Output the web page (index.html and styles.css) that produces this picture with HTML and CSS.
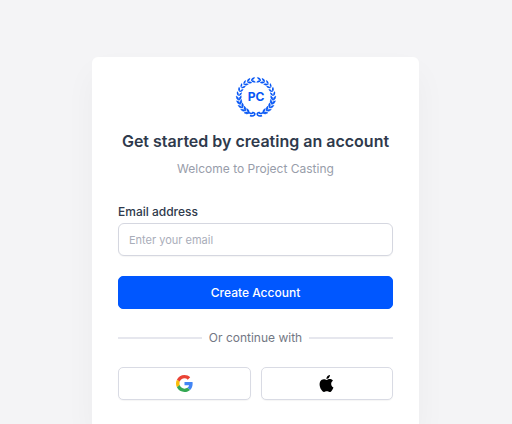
FILE: index.html
```
<!DOCTYPE html>
<html lang="en">
<head>
<meta charset="utf-8">
<meta name="viewport" content="width=device-width, initial-scale=1">
<title>Project Casting</title>
<link rel="stylesheet" href="styles.css">
</head>
<body>
<main class="page">
  <section class="card">
    <svg class="logo" viewBox="-21 -21 42 42" role="img" aria-label="Project Casting">
      <defs>
        <path id="leaf" d="M-2.4 -17.2Q-1.600 -20 2 -19.700Q1 -17.200 -2.400 -17.200ZM-2.400 -17.200Q.8 -17.300 2 -14.700Q-1.200 -14.200 -2.400 -17.200Z"/>
        <g id="branch">
          <use href="#leaf" class="tip" transform="rotate(-9)"/>
          <use href="#leaf" class="tip" transform="rotate(-23)"/>
          <use href="#leaf" class="tip" transform="rotate(-37)"/>
          <use href="#leaf" transform="rotate(-51)"/>
          <use href="#leaf" transform="rotate(-65)"/>
          <use href="#leaf" transform="rotate(-79)"/>
          <use href="#leaf" class="base" transform="rotate(-93)"/>
          <use href="#leaf" class="base" transform="rotate(-107)"/>
          <use href="#leaf" class="base" transform="rotate(-121)"/>
          <use href="#leaf" class="base" transform="rotate(-135)"/>
          <use href="#leaf" class="base" transform="rotate(-149)"/>
          <path class="stem" d="M-7 15.500Q-4.500 17.500 -3 15.500Q-.5 16 -1.500 18Q-3.500 19.800 -6 18.500"/>
        </g>
      </defs>
      <use href="#branch"/>
      <use href="#branch" transform="scale(-1 1)"/>
      <text class="logo-text" x="0" y="4" text-anchor="middle">PC</text>
    </svg>
    <h1 class="title">Get started by creating an account</h1>
    <p class="subtitle">Welcome to Project Casting</p>
    <form class="form">
      <label class="label" for="email">Email address</label>
      <input class="input" id="email" type="email" placeholder="Enter your email">
      <button class="button primary" type="submit">Create Account</button>
      <div class="divider">Or continue with</div>
      <div class="providers">
        <button class="button provider" type="button" aria-label="Google">
          <svg class="icon" viewBox="0 0 48 48" aria-hidden="true">
            <path fill="#EA4335" d="M24 9.500c3.540 0 6.710 1.220 9.210 3.600l6.850-6.850C35.900 2.380 30.470 0 24 0 14.620 0 6.510 5.380 2.560 13.220l7.980 6.190C12.430 13.720 17.740 9.500 24 9.500z"/>
            <path fill="#4285F4" d="M46.980 24.550c0-1.570-.15-3.090-.38-4.550H24v9.020h12.940c-.58 2.960-2.260 5.480-4.780 7.180l7.730 6c4.510-4.180 7.090-10.360 7.090-17.650z"/>
            <path fill="#FBBC05" d="M10.530 28.590c-.48-1.450-.76-2.990-.76-4.590s.27-3.140.76-4.590l-7.980-6.190C.92 16.460 0 20.120 0 24s.92 7.540 2.560 10.780z"/>
            <path fill="#34A853" d="M24 48c6.480 0 11.930-2.130 15.890-5.810l-7.730-6c-2.150 1.450-4.920 2.300-8.160 2.300-6.260 0-11.570-4.220-13.470-9.910l-7.980 6.190C6.510 42.620 14.620 48 24 48z"/>
          </svg>
        </button>
        <button class="button provider" type="button" aria-label="Apple">
          <svg class="icon" viewBox="0 0 24 24" aria-hidden="true">
            <path d="M12.152 6.896c-.948 0-2.415-1.078-3.960-1.040-2.040.027-3.910 1.183-4.961 3.014-2.117 3.675-.546 9.103 1.519 12.090 1.013 1.454 2.208 3.090 3.792 3.039 1.520-.065 2.090-.987 3.935-.987 1.831 0 2.350.987 3.960.948 1.637-.026 2.676-1.480 3.676-2.948 1.156-1.688 1.636-3.325 1.662-3.415-.039-.013-3.182-1.221-3.220-4.857-.026-3.040 2.480-4.494 2.597-4.559-1.429-2.090-3.623-2.324-4.390-2.376-2-.156-3.675 1.090-4.610 1.090zM15.530 3.830c.843-1.012 1.400-2.427 1.245-3.830-1.207.052-2.662.805-3.532 1.818-.780.896-1.454 2.338-1.273 3.714 1.338.104 2.715-.688 3.559-1.701"/>
          </svg>
        </button>
      </div>
    </form>
  </section>
</main>
</body>
</html>
```
FILE: styles.css
```
* {
  box-sizing: border-box;
}

body {
  margin: 0;
  background: #f4f4f6;
  color: #2f3a4c;
  font-family: Inter, "Liberation Sans", sans-serif;
}

.page {
  display: flex;
  justify-content: center;
  min-height: 100vh;
  padding: 57px 17px 0 16px;
  overflow: hidden;
}

.card {
  width: 100%;
  max-width: 327px;
  padding: 19px 26px 24px;
  border-radius: 6px 6px 0 0;
  background: #fff;
  box-shadow: 0 16px 32px rgb(40 40 60 / 4%);
}

.logo {
  display: block;
  width: 42px;
  height: 42px;
  margin: 0 auto;
  fill: #0757f5;
}

.base {
  stroke: #0757f5;
  stroke-width: .5;
}

.tip {
  stroke: #0757f5;
  stroke-width: .1;
}

.stem {
  fill: none;
  stroke: #0757f5;
  stroke-width: 1.6;
}

.logo-text {
  font-size: 12px;
  font-weight: 700;
}

.title {
  margin: 12px 0 0;
  font-size: 16px;
  font-weight: 600;
  line-height: 22px;
  text-align: center;
  white-space: nowrap;
}

.subtitle {
  margin: 8px 0 0;
  color: #989daa;
  font-size: 12px;
  line-height: 18px;
  text-align: center;
}

.form {
  display: flex;
  flex-direction: column;
  margin-top: 25px;
}

.label {
  font-size: 12px;
  font-weight: 500;
  line-height: 18px;
}

.input {
  width: 100%;
  height: 33px;
  margin: 2px 0 20px;
  padding: 0 10px;
  border: 1px solid #d5d7e0;
  border-radius: 6px;
  background: #fff;
  color: inherit;
  font: 11px Inter, "Liberation Sans", sans-serif;
  box-shadow: 0 1px 1px rgb(0 0 0 / 4%);
}

.input::placeholder {
  color: #a9adb9;
  opacity: 1;
}

.button {
  display: flex;
  align-items: center;
  justify-content: center;
  height: 33px;
  padding: 0;
  border: 1px solid #d9dbe4;
  border-radius: 5px;
  background: #fff;
  font: 500 12px Inter, "Liberation Sans", sans-serif;
}

.primary {
  border-color: #0057ff;
  background: #0057ff;
  color: #fff;
}

.divider {
  display: flex;
  align-items: center;
  gap: 7px;
  margin: 20px 0;
  color: #737784;
  font-size: 12px;
  line-height: 18px;
}

.divider::before,
.divider::after {
  flex: 1;
  height: 2px;
  background: #e6e7ee;
  content: "";
}

.providers {
  display: grid;
  grid-template-columns: 1fr 1fr;
  gap: 10px;
}

.provider {
  box-shadow: 0 1px 1px rgb(0 0 0 / 4%);
}

.icon {
  width: 17px;
  height: 17px;
}
```
